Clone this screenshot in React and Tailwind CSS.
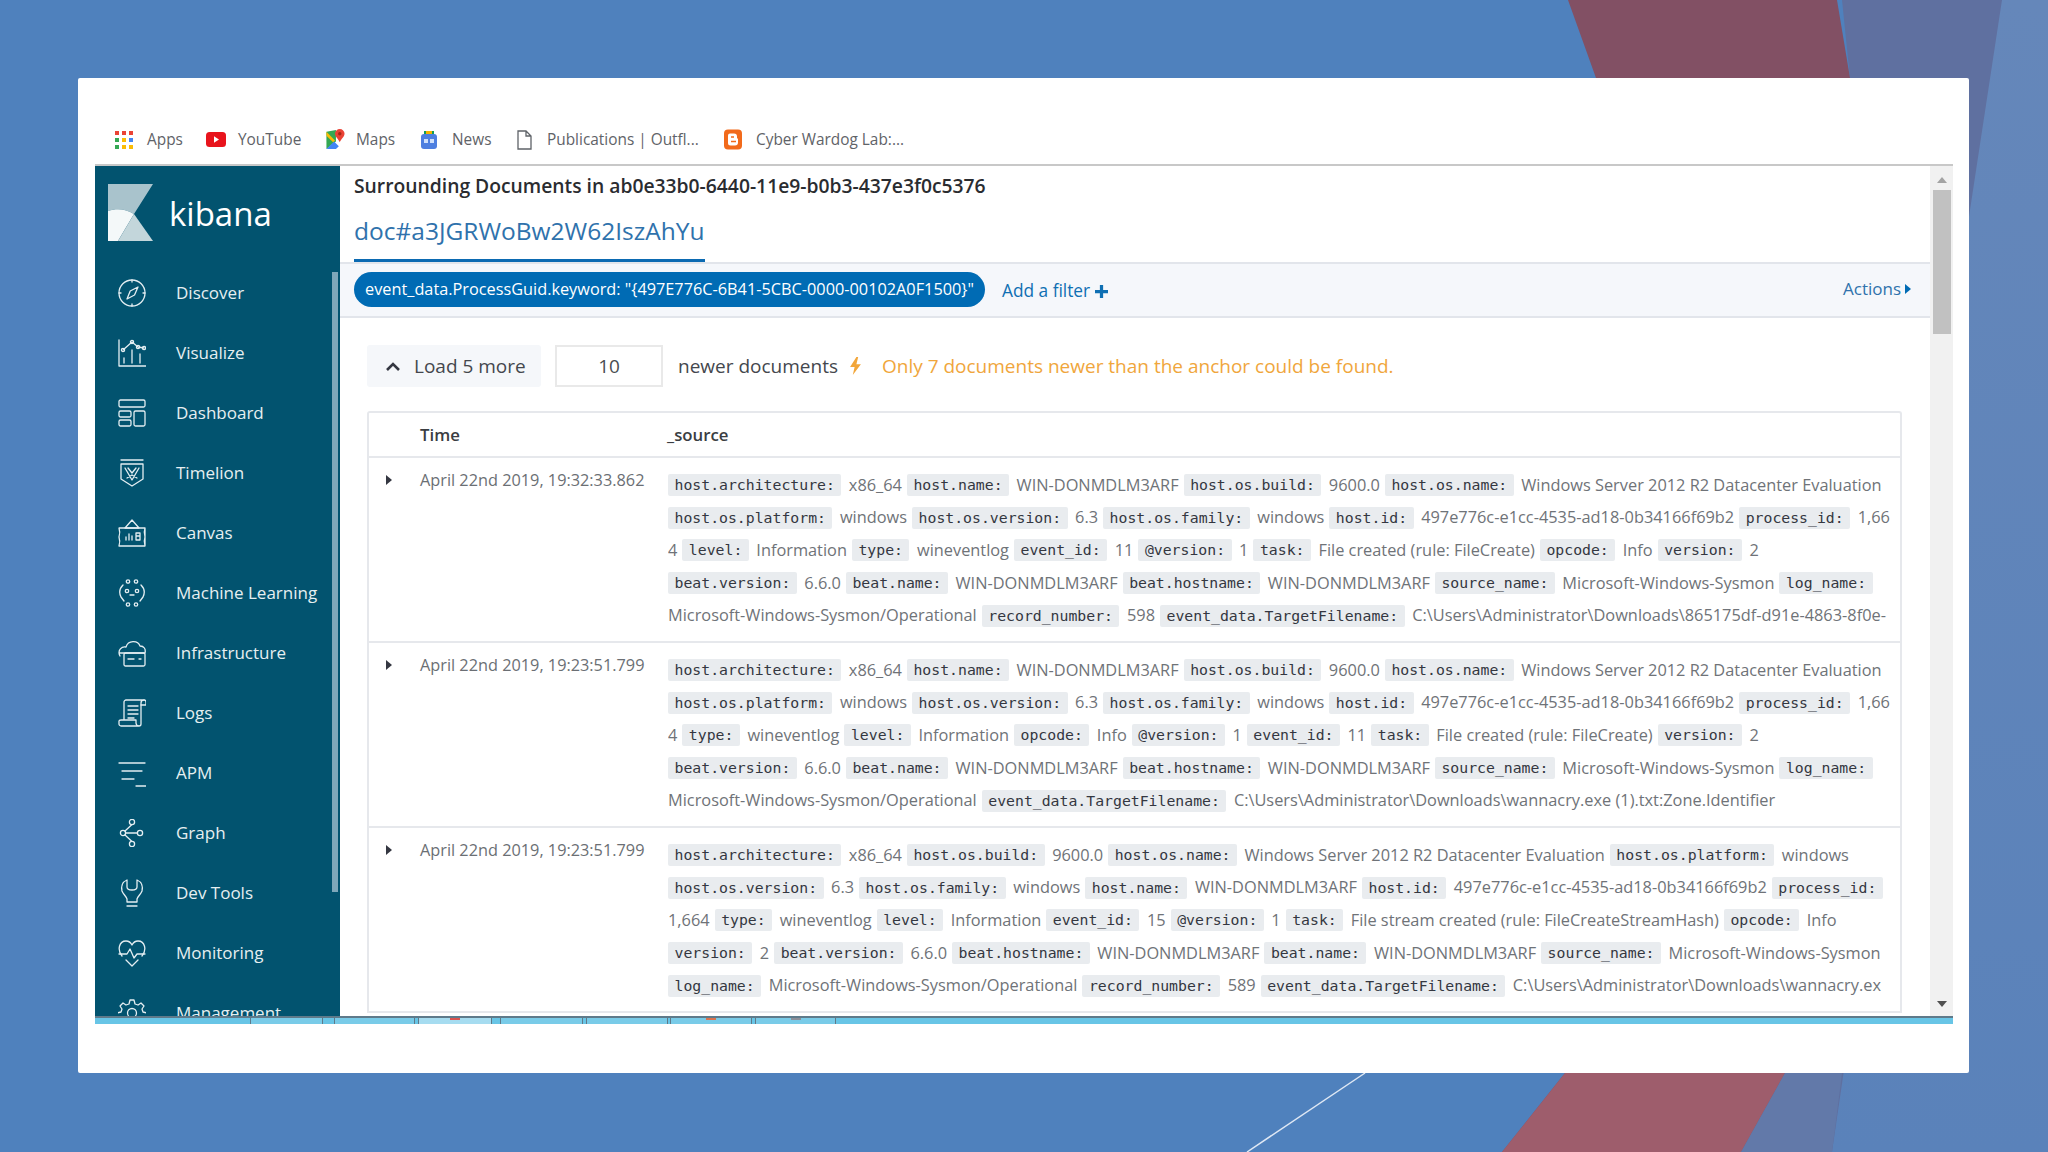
const rows = [
  {
    time: 'April 22nd 2019, 19:32:33.862',
    lines: [
      [['host.architecture:', 'x86_64'], ['host.name:', 'WIN-DONMDLM3ARF'], ['host.os.build:', '9600.0'], ['host.os.name:', 'Windows Server 2012 R2 Datacenter Evaluation']],
      [['host.os.platform:', 'windows'], ['host.os.version:', '6.3'], ['host.os.family:', 'windows'], ['host.id:', '497e776c-e1cc-4535-ad18-0b34166f69b2'], ['process_id:', '1,66']],
      [[null, '4'], ['level:', 'Information'], ['type:', 'wineventlog'], ['event_id:', '11'], ['@version:', '1'], ['task:', 'File created (rule: FileCreate)'], ['opcode:', 'Info'], ['version:', '2']],
      [['beat.version:', '6.6.0'], ['beat.name:', 'WIN-DONMDLM3ARF'], ['beat.hostname:', 'WIN-DONMDLM3ARF'], ['source_name:', 'Microsoft-Windows-Sysmon'], ['log_name:', '']],
      [[null, 'Microsoft-Windows-Sysmon/Operational'], ['record_number:', '598'], ['event_data.TargetFilename:', 'C:\\Users\\Administrator\\Downloads\\865175df-d91e-4863-8f0e-']],
    ],
  },
  {
    time: 'April 22nd 2019, 19:23:51.799',
    lines: [
      [['host.architecture:', 'x86_64'], ['host.name:', 'WIN-DONMDLM3ARF'], ['host.os.build:', '9600.0'], ['host.os.name:', 'Windows Server 2012 R2 Datacenter Evaluation']],
      [['host.os.platform:', 'windows'], ['host.os.version:', '6.3'], ['host.os.family:', 'windows'], ['host.id:', '497e776c-e1cc-4535-ad18-0b34166f69b2'], ['process_id:', '1,66']],
      [[null, '4'], ['type:', 'wineventlog'], ['level:', 'Information'], ['opcode:', 'Info'], ['@version:', '1'], ['event_id:', '11'], ['task:', 'File created (rule: FileCreate)'], ['version:', '2']],
      [['beat.version:', '6.6.0'], ['beat.name:', 'WIN-DONMDLM3ARF'], ['beat.hostname:', 'WIN-DONMDLM3ARF'], ['source_name:', 'Microsoft-Windows-Sysmon'], ['log_name:', '']],
      [[null, 'Microsoft-Windows-Sysmon/Operational'], ['event_data.TargetFilename:', 'C:\\Users\\Administrator\\Downloads\\wannacry.exe (1).txt:Zone.Identifier']],
    ],
  },
  {
    time: 'April 22nd 2019, 19:23:51.799',
    lines: [
      [['host.architecture:', 'x86_64'], ['host.os.build:', '9600.0'], ['host.os.name:', 'Windows Server 2012 R2 Datacenter Evaluation'], ['host.os.platform:', 'windows']],
      [['host.os.version:', '6.3'], ['host.os.family:', 'windows'], ['host.name:', 'WIN-DONMDLM3ARF'], ['host.id:', '497e776c-e1cc-4535-ad18-0b34166f69b2'], ['process_id:', '']],
      [[null, '1,664'], ['type:', 'wineventlog'], ['level:', 'Information'], ['event_id:', '15'], ['@version:', '1'], ['task:', 'File stream created (rule: FileCreateStreamHash)'], ['opcode:', 'Info']],
      [['version:', '2'], ['beat.version:', '6.6.0'], ['beat.hostname:', 'WIN-DONMDLM3ARF'], ['beat.name:', 'WIN-DONMDLM3ARF'], ['source_name:', 'Microsoft-Windows-Sysmon']],
      [['log_name:', 'Microsoft-Windows-Sysmon/Operational'], ['record_number:', '589'], ['event_data.TargetFilename:', 'C:\\Users\\Administrator\\Downloads\\wannacry.ex']],
    ],
  },
];

// EUI app icons, hand traced on a 28 box
const navIcons = {
  Discover: (
    <>
      <circle cx="14" cy="14" r="13" />
      <path d="M20 8l-3.5 8L9 20l3.2-8z" />
      <path d="M14 1v2M14 25v2M1 14h2M25 14h2" />
    </>
  ),
  Visualize: (
    <>
      <path d="M1 1v26h27" />
      <path d="M5 11l9-8 6 5 6 1" />
      <circle cx="5" cy="11" r="1.6" />
      <circle cx="14" cy="3" r="1.6" />
      <circle cx="20" cy="8" r="1.6" />
      <circle cx="26" cy="9" r="1.6" />
      <path d="M6 19v5M14 11v13M22 15v9" />
    </>
  ),
  Dashboard: (
    <>
      <rect x="1" y="1" width="26" height="7" rx="1.5" />
      <rect x="1" y="12" width="12" height="6" rx="1.5" />
      <rect x="1" y="21" width="12" height="6" rx="1.5" />
      <rect x="16" y="12" width="11" height="15" rx="1.5" />
    </>
  ),
  Timelion: (
    <>
      <path d="M3 1h22" />
      <path d="M3 5h22v15l-11 7-11-7z" />
      <path d="M7 9l7 12 7-12M10 9l4 5 4-5M9 19l5-3 5 3" />
    </>
  ),
  Canvas: (
    <>
      <path d="M14 1l-7 8h14z" />
      <path d="M1 9h26v18H1c1-3 1-6 0-9 1-3 1-6 0-9zM27 9c-1 3-1 6 0 9-1 3-1 6 0 9" />
      <path d="M8 21v-3M11 21v-6M14 21v-4" />
      <path d="M18 14h4v7h-4zM18 17h4" />
    </>
  ),
  'Machine Learning': (
    <>
      <circle cx="10" cy="2.5" r="1.7" />
      <circle cx="18" cy="2.5" r="1.7" />
      <circle cx="9" cy="12" r="1.7" />
      <circle cx="19" cy="12" r="1.7" />
      <circle cx="10" cy="25.5" r="1.7" />
      <circle cx="18" cy="25.5" r="1.7" />
      <path d="M5 6c-4 4-4 8-2 12M23 6c4 4 4 8 2 12M3 18l3 4M25 18l-3 4M12 16h4" />
    </>
  ),
  Infrastructure: (
    <>
      <path d="M2 17C-1 11 4 7 8 8c2-7 12-7 14-1 4 0 6 3 5 7H1" />
      <rect x="6" y="14" width="21" height="13" rx="1.5" />
      <path d="M10 20h6M21 20h2" />
    </>
  ),
  Logs: (
    <>
      <path d="M6 21V3c0-1 1-2 2-2h18c-2 0-3 1-3 3v21c0 1-1 2-2 2H3c-1 0-2-1-2-2v-3c0-1 1-1 2-1h15v3c0 2 2 3 3 3" />
      <path d="M26 1c1 0 2 1 2 2v3h-5" />
      <path d="M10 7h10M10 11h10M10 15h10M10 19h6" />
    </>
  ),
  APM: <path d="M1 4h26M4 12h20M4 20h12M18 27h10" />,
  Graph: (
    <>
      <circle cx="14" cy="3" r="2.6" />
      <circle cx="22" cy="14" r="2.6" />
      <circle cx="14" cy="25" r="2.6" />
      <circle cx="5" cy="14" r="2.6" />
      <path d="M7.6 14H19.4M14 5.6L7 12M14 22.4L7 16" />
    </>
  ),
  'Dev Tools': (
    <path d="M9 1C4 3 3 8 4 12c1 3 4 5 5 8v3h10v-3c1-3 4-5 5-8 1-4 0-9-5-11v7c0 2-2 3-5 3s-5-1-5-3zM9 27h10" />
  ),
  Monitoring: (
    <>
      <path d="M4 17C-1 11 1 2 8 2c3 0 5 2 6 4 1-2 3-4 6-4 7 0 9 9 4 15" />
      <path d="M1 15h8l3-5 4 9 3-4h8" />
      <path d="M8 21l6 6 6-6" />
    </>
  ),
  Management: (
    <>
      <path d="M12 1h4l1 4 3 1 3-2 3 3-2 3 1 3 4 1v4l-4 1-1 3 2 3-3 3-3-2-3 1-1 4h-4l-1-4-3-1-3 2-3-3 2-3-1-3-4-1v-4l4-1 1-3-2-3 3-3 3 2 3-1z" />
      <circle cx="14" cy="14" r="4.5" />
    </>
  ),
};

const navItems = ['Discover', 'Visualize', 'Dashboard', 'Timelion', 'Canvas', 'Machine Learning', 'Infrastructure', 'Logs', 'APM', 'Graph', 'Dev Tools', 'Monitoring', 'Management'];

const taskButtons = [
  { w: 'w-[73px]', ml: 'ml-[155px]' },
  { w: 'w-[81px]', ml: 'ml-[11px]' },
  { w: 'w-[74px]', ml: 'ml-[3px]', active: true, mark: 'bg-[#d9534f]' },
  { w: 'w-[83px]', ml: 'ml-[8px]' },
  { w: 'w-[82px]', ml: 'ml-[3px]' },
  { w: 'w-[82px]', ml: 'ml-[2px]', mark: 'bg-[#d9734f]' },
  { w: 'w-[81px]', ml: 'ml-[3px]', mark: 'bg-[#8a8f99]' },
];

function Bookmark({ icon, label, className }) {
  return (
    <div className={`flex items-center shrink-0 ${className}`}>
      {icon}
      <span className="text-[15.4px] text-[#5f6368] whitespace-nowrap font-['Open_Sans',sans-serif]">{label}</span>
    </div>
  );
}

function Bookmarks() {
  const dots = ['#ea4335', '#ea4335', '#ea4335', '#34a853', '#fbbc05', '#4285f4', '#34a853', '#fbbc05', '#fbbc05'];
  return (
    <div className="h-[86px] pt-[38px] pl-[20px] flex items-center">
      <Bookmark
        className="w-[91px]"
        label="Apps"
        icon={
          <div className="grid grid-cols-3 gap-[3px] w-[18px] mr-[14px]">
            {dots.map((c, i) => (
              <svg key={i} viewBox="0 0 4 4" className="w-[4px] h-[4px]"><rect width="4" height="4" fill={c} /></svg>
            ))}
          </div>
        }
      />
      <Bookmark
        className="w-[119px]"
        label="YouTube"
        icon={
          <svg viewBox="0 0 20 15" className="w-[20px] h-[15px] mr-[12px]">
            <rect width="20" height="15" rx="3.5" fill="#e8141c" />
            <path d="M8 4.2l5 3.3-5 3.3z" fill="#fff" />
          </svg>
        }
      />
      <Bookmark
        className="w-[96px]"
        label="Maps"
        icon={
          <svg viewBox="0 0 20 22" className="w-[20px] h-[21px] mr-[11px]">
            <path d="M1 3l10-2v12L1 21z" fill="#34a853" />
            <path d="M1 21l8-8 5 5-3 3z" fill="#4285f4" />
            <path d="M1 3l9 9-2 2-7-7z" fill="#fbbc05" />
            <path d="M15 0a5 5 0 015 5c0 3-4 6-5 9-1-3-5-6-5-9a5 5 0 015-5z" fill="#ea4335" />
            <circle cx="15" cy="5" r="1.8" fill="#a52714" />
          </svg>
        }
      />
      <Bookmark
        className="w-[96px]"
        label="News"
        icon={
          <svg viewBox="0 0 16 18" className="w-[16px] h-[18px] mr-[15px]">
            <path d="M3 0h10v4H3z" fill="#0f9d58" />
            <path d="M5 0h6v3H5z" fill="#f4b400" />
            <rect y="3" width="16" height="15" rx="3" fill="#4d7fe0" />
            <rect x="3" y="8" width="4" height="4" fill="#cfe0fb" />
            <rect x="9" y="8" width="4" height="4" fill="#cfe0fb" />
          </svg>
        }
      />
      <Bookmark
        className="w-[207px]"
        label="Publications | Outfl..."
        icon={
          <svg viewBox="0 0 15 20" className="w-[15px] h-[20px] mr-[15px]" fill="none" stroke="#5f6368" strokeWidth="1.3">
            <path d="M1 1h8l5 5v13H1zM9 1v5h5" />
          </svg>
        }
      />
      <Bookmark
        label="Cyber Wardog Lab:..."
        icon={
          <svg viewBox="0 0 18 20" className="w-[18px] h-[21px] mr-[14px]">
            <rect width="18" height="20" rx="4" fill="#f26a1b" />
            <path d="M6 4h4a3 3 0 013 3v1.5l1 1V13a3 3 0 01-3 3H6.5A2.5 2.5 0 014 13.500V6a2 2 0 012-2z" fill="#fff" />
            <path d="M7 7.500h3M7 12h5" stroke="#f26a1b" strokeWidth="1.500" />
          </svg>
        }
      />
    </div>
  );
}

function Sidebar() {
  return (
    <aside className="relative w-[245px] shrink-0 bg-[#02536f] overflow-hidden font-['Open_Sans',sans-serif]">
      <div className="h-[97px] pl-[13px] pt-[18px] flex items-start">
        <svg viewBox="0 0 45 57" className="w-[45px] h-[57px] shrink-0">
          <path d="M0 0h45L26 30C18 25 9 24 0 27z" fill="#a9c3cc" />
          <path d="M0 27c9-3 18-2 26 3L10 57H0z" fill="#f4f8f9" />
          <path d="M26 30l19 27H10z" fill="#c3d6db" />
        </svg>
        <span className="ml-[16px] mt-[8px] text-[33px] leading-[44px] font-medium text-white">kibana</span>
      </div>
      {navItems.map((name) => (
        <div key={name} className="h-[60px] flex items-center pl-[23px]">
          <svg viewBox="0 0 28 28" fill="none" stroke="#e4eef2" strokeWidth="1.300" strokeLinecap="round" strokeLinejoin="round" className="w-[28px] h-[28px] shrink-0">
            {navIcons[name]}
          </svg>
          <span className="ml-[30px] text-[17px] text-[#e6eff1] whitespace-nowrap">{name}</span>
        </div>
      ))}
      <div className="absolute left-[237px] top-[106px] w-[6px] h-[620px] bg-[#7ea7b9]" />
    </aside>
  );
}

function SourceLine({ tokens }) {
  return (
    <div className="h-[32.7px] flex items-center whitespace-nowrap overflow-hidden">
      {tokens.map(([key, value], i) => (
        <div key={i} className="flex items-center mr-[5px] shrink-0">
          {key && (
            <span className="h-[22px] leading-[22px] px-[6.5px] rounded-[2px] bg-[#e9ecef] text-[#343741] text-[14.8px] font-['DejaVu_Sans_Mono',monospace] mr-[7.5px]">
              {key}
            </span>
          )}
          {value && <span className="text-[16.35px] text-[#6f7378]">{value}</span>}
        </div>
      ))}
    </div>
  );
}

function DocRow({ time, lines }) {
  return (
    <div className="h-[185px] border-b-2 border-[#e6e8ec] flex items-start overflow-hidden">
      <div className="w-[52px] pt-[17px] pl-[17px] shrink-0">
        <svg viewBox="0 0 6 10" className="w-[6px] h-[10px]"><path d="M0 0l6 5-6 5z" fill="#343741" /></svg>
      </div>
      <div className="w-[247px] shrink-0 pt-[10px] -ml-[1px] mr-[1px] text-[16.3px] leading-[25px] text-[#6b6f74] whitespace-nowrap">{time}</div>
      <div className="flex-1 min-w-0 pt-[10.6px] pr-[8px]">
        {lines.map((tokens, i) => (
          <SourceLine key={i} tokens={tokens} />
        ))}
      </div>
    </div>
  );
}

function Main() {
  return (
    <main className="flex-1 min-w-0 flex flex-col overflow-hidden font-['Open_Sans',sans-serif]">
      <div className="pl-[14px] pt-[7px]">
        <h1 className="text-[19.3px] leading-[25px] font-semibold text-[#2a2c30] whitespace-nowrap">
          Surrounding Documents in ab0e33b0-6440-11e9-b0b3-437e3f0c5376
        </h1>
        <div className="mt-[9px] w-[351px] h-[55px] pt-[6px] border-b-[3px] border-[#0b6ab2] text-[24.5px] leading-[36px] text-[#2f72ac] whitespace-nowrap">
          doc#a3JGRWoBw2W62IszAhYu
        </div>
      </div>
      <div className="h-[56px] shrink-0 bg-[#f5f7fb] border-y-2 border-[#e2e5eb] flex items-center pl-[14px] pr-[19px]">
        <div className="h-[35px] w-[631px] -mt-[1px] rounded-full bg-[#006bb4] flex items-center justify-center text-white text-[16.3px] whitespace-nowrap">
          event_data.ProcessGuid.keyword: "{'{'}497E776C-6B41-5CBC-0000-00102A0F1500{'}'}"
        </div>
        <span className="ml-[17px] mt-[2px] text-[17.3px] text-[#0f6fb3] whitespace-nowrap">Add a filter</span>
        <svg viewBox="0 0 12 12" className="ml-[5px] mt-[2px] w-[13px] h-[13px]"><path d="M4.500 0h3v4.500H12v3H7.500V12h-3V7.500H0v-3h4.500z" fill="#0f6fb3" /></svg>
        <span className="ml-auto -mt-[2px] text-[17px] text-[#2f72ac] whitespace-nowrap">Actions</span>
        <svg viewBox="0 0 6 10" className="ml-[4px] -mt-[2px] w-[6px] h-[10px]"><path d="M0 0l6 5-6 5z" fill="#006bb4" /></svg>
      </div>
      <div className="pl-[27px] pt-[27px] flex items-center">
        <div className="w-[174px] h-[42px] bg-[#f5f7fa] rounded-[3px] flex items-center pl-[19px] text-[19px] text-[#44474d]">
          <svg viewBox="0 0 14 10" fill="none" stroke="#343741" strokeWidth="2.600" className="w-[14px] h-[10px] mr-[14px]"><path d="M1 9l6-6 6 6" /></svg>
          Load 5 more
        </div>
        <div className="ml-[14px] w-[108px] h-[42px] border-2 border-[#e9e9e9] flex items-center justify-center text-[19px] text-[#4a4d52]">10</div>
        <span className="ml-[15px] text-[19px] text-[#44474d] whitespace-nowrap">newer documents</span>
        <svg viewBox="0 0 12 20" className="ml-[12px] w-[11px] h-[18px]"><path d="M7 0L0 11h5l-2 9 9-12H7l2-8z" fill="#f2a63a" /></svg>
        <span className="ml-[21px] text-[19px] text-[#f0a63c] whitespace-nowrap">Only 7 documents newer than the anchor could be found.</span>
      </div>
      <div className="ml-[27px] mr-[28px] mt-[24px] border-x-2 border-t-2 border-[#e6e8ec] rounded-t-[3px]">
        <div className="h-[45px] pt-[1px] border-b-2 border-[#e6e8ec] flex items-center text-[16.8px] font-semibold text-[#3a3d42]">
          <span className="ml-[51px] w-[247px]">Time</span>
          <span>_source</span>
        </div>
        {rows.map((row, i) => (
          <DocRow key={i} {...row} />
        ))}
      </div>
    </main>
  );
}

export default function App() {
  return (
    <div className="relative w-full h-[1152px] overflow-hidden bg-[#4f81bd] pl-[78px] pt-[78px]">
      <svg viewBox="0 0 2048 1152" className="absolute inset-0 w-[2048px] h-[1152px]">
        <defs>
          <linearGradient id="side" x1="0" y1="0" x2="0" y2="1">
            <stop offset="0" stopColor="#6587ba" />
            <stop offset="1" stopColor="#5a82ba" />
          </linearGradient>
        </defs>
        <path d="M1842 0H2048V1152H1741L1850 78z" fill="#5f70a0" />
        <path d="M2002 0H2048V1152H1832L1970 210z" fill="url(#side)" />
        <path d="M1568 0H1837L1850 78L1785 1073L1741 1152H1502L1565 1073L1596 78z" fill="#825064" />
        <path d="M1565 1073H1785L1741 1152H1502z" fill="#9e5d6c" />
        <path d="M1785 1073H1842L1832 1152H1741z" fill="#6279a9" />
        <path d="M1365 1073L1247 1152" stroke="#dfe8f4" strokeWidth="1.500" />
      </svg>
      <div className="relative w-[1891px] h-[995px] bg-white rounded-[2px] pl-[17px]">
        <Bookmarks />
        <div className="w-[1858px] h-[852px] flex border-t-2 border-[#c8c8c8]">
          <Sidebar />
          <Main />
          <div className="w-[23px] shrink-0 bg-[#f1f1f1] relative flex flex-col items-center">
            <svg viewBox="0 0 10 6" className="w-[10px] h-[6px] mt-[11px]"><path d="M5 0l5 6H0z" fill="#a3a3a3" /></svg>
            <div className="mt-[7px] w-[18px] h-[144px] bg-[#c1c1c1]" />
            <svg viewBox="0 0 10 6" className="w-[10px] h-[6px] mt-auto mb-[9px]"><path d="M5 6l5-6H0z" fill="#505050" /></svg>
          </div>
        </div>
        <div className="w-[1858px] h-[8px] border-t-2 border-[#5f7a8a] bg-[#68c5e6] flex overflow-hidden">
          {taskButtons.map((b, i) => (
            <div key={i} className={`${b.w} ${b.ml} h-full border-x border-[#5f7a8a] flex justify-center ${b.active ? 'bg-[#a6dcf0]' : 'bg-[#79cbe8]'}`}>
              {b.mark && <div className={`w-[10px] h-[2px] ${b.mark}`} />}
            </div>
          ))}
        </div>
      </div>
    </div>
  );
}
